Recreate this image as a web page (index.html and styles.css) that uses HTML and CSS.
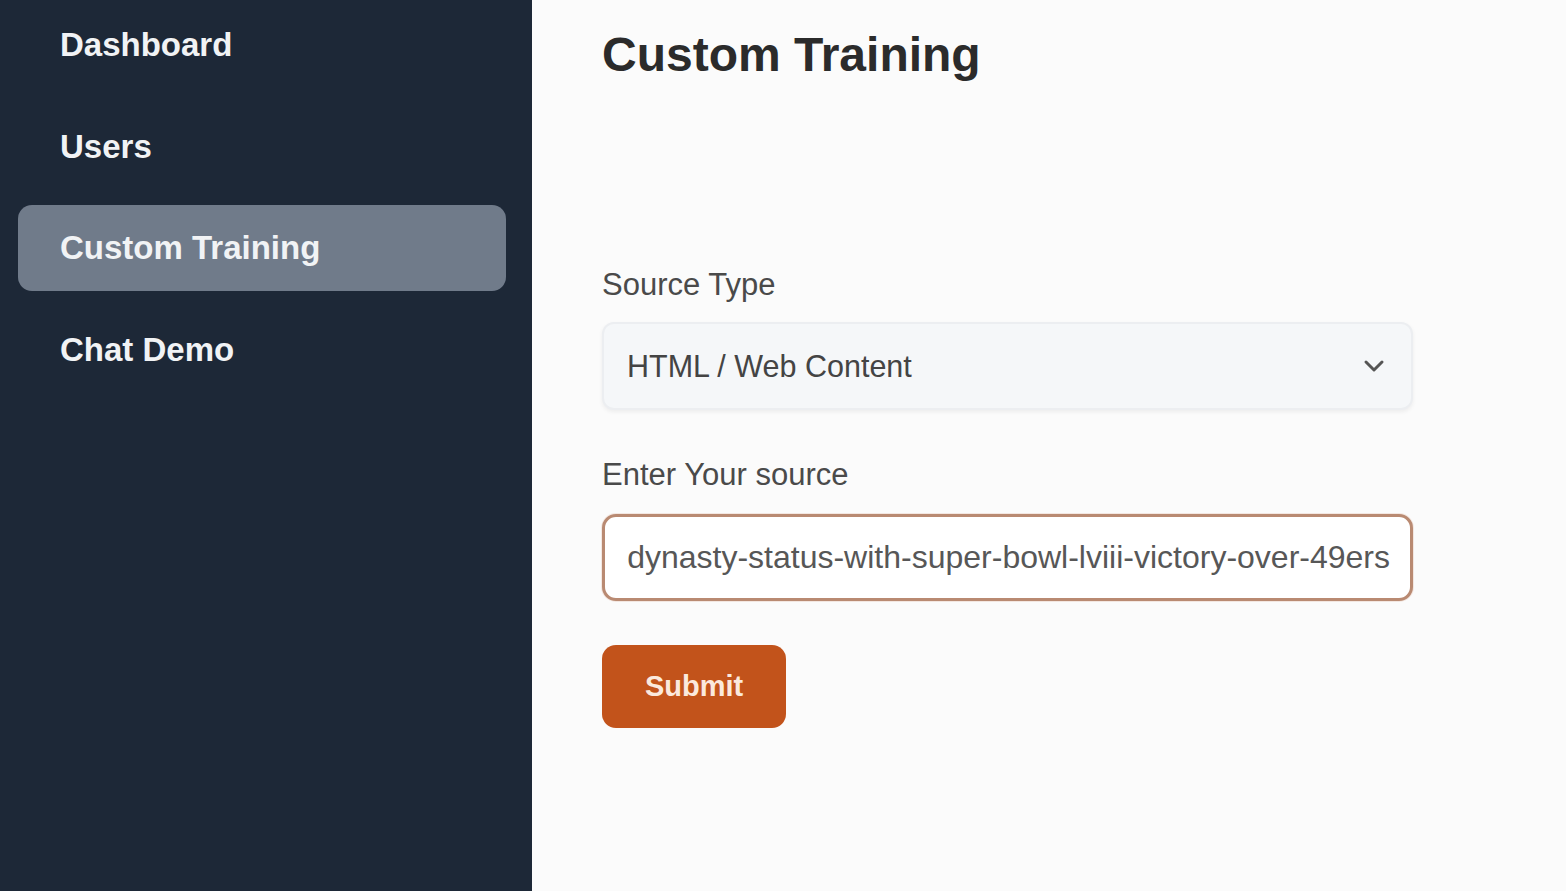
FILE: index.html
```html
<!DOCTYPE html>
<html lang="en">
<head>
    <meta charset="UTF-8">
    <meta name="viewport" content="width=device-width, initial-scale=1.0">
    <title>Custom Training</title>
    <link rel="stylesheet" href="styles.css">
</head>
<body>
    <div class="layout">
        <nav class="sidebar">
            <a class="nav-item" href="#">Dashboard</a>
            <a class="nav-item" href="#">Users</a>
            <a class="nav-item active" href="#">Custom Training</a>
            <a class="nav-item" href="#">Chat Demo</a>
        </nav>
        <main class="main">
            <h1>Custom Training</h1>
            <form class="training-form">
                <label class="field-label">Source Type</label>
                <div class="select-box">
                    <span>HTML / Web Content</span>
                    <svg class="chevron" width="22" height="14" viewBox="0 0 22 14"><path d="M3 3 L11 11 L19 3" fill="none" stroke="#555" stroke-width="3" stroke-linecap="round" stroke-linejoin="round"/></svg>
                </div>
                <label class="field-label second">Enter Your source</label>
                <div class="source-input">
                    <div class="source-clip">
                        <span class="source-text">https://www.nfl.com/news/chiefs-cement-dynasty-status-with-super-bowl-lviii-victory-over-49ers</span>
                    </div>
                </div>
                <button type="button" class="submit-btn">Submit</button>
            </form>
        </main>
    </div>
</body>
</html>
```

FILE: styles.css
```css
html, body { margin: 0; padding: 0; height: 100%; }
body { font-family: "Liberation Sans", Arial, sans-serif; background-color: #fbfbfb; color: #333; }
.layout { display: flex; height: 891px; overflow: hidden; }
.sidebar { width: 488px; flex-shrink: 0; background-color: #1d2837; padding: 2px 26px 0 18px; display: flex; flex-direction: column; gap: 15.5px; }
.nav-item { display: flex; align-items: center; height: 86px; padding-left: 42px; border-radius: 14px; color: #f1f3f5; font-size: 33px; font-weight: bold; text-decoration: none; }
.nav-item.active { background-color: #707b8a; }
.main { flex: 1; padding: 27px 0 0 70px; }
.main h1 { margin: 0; font-size: 48px; line-height: 56px; font-weight: bold; color: #2b2b2b; }
.training-form { display: flex; flex-direction: column; align-items: flex-start; width: 811px; margin-top: 184px; }
.field-label { font-size: 31px; line-height: 36px; color: #4a4a4a; margin-bottom: 19px; }
.field-label.second { margin-top: 47px; margin-bottom: 21px; }
.select-box { box-sizing: border-box; width: 100%; height: 88px; display: flex; align-items: center; justify-content: space-between; padding: 0 26px 0 23px; background-color: #f5f7f9; border: 2px solid #eceef1; border-radius: 12px; box-shadow: 0 2px 4px rgba(0, 0, 0, 0.06); font-size: 30.5px; color: #444; }
.source-input { box-sizing: border-box; width: 100%; height: 87px; display: flex; align-items: center; padding: 0 20px 0 22px; background-color: #fff; border: 3px solid #b98a72; border-radius: 14px; box-shadow: 0 0 0 1px rgba(200, 120, 80, 0.15); }
.source-clip { flex: 1; display: flex; justify-content: flex-end; overflow: hidden; }
.source-text { white-space: nowrap; font-size: 32px; color: #575757; }
.submit-btn { margin-top: 44px; height: 83px; padding: 0 43px; border: none; border-radius: 14px; background-color: #c2531b; color: #fbe9dd; font-family: "Liberation Sans", Arial, sans-serif; font-size: 29px; font-weight: bold; cursor: pointer; }
```
